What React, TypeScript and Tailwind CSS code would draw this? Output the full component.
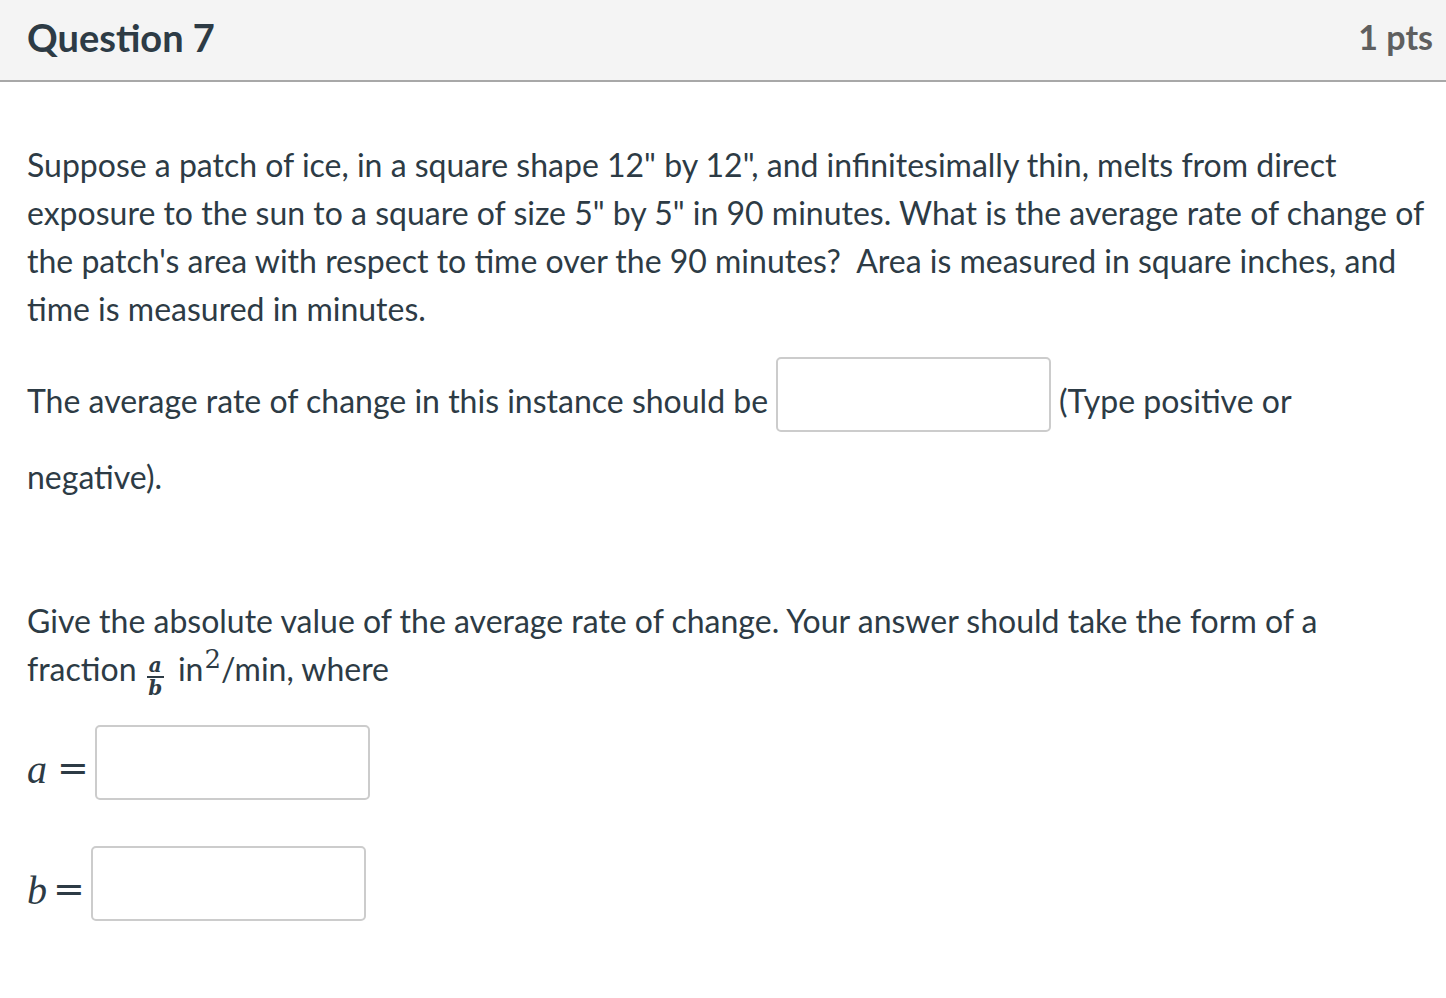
import React from "react";

const mathFont = { fontFamily: '"DejaVu Serif", "Liberation Serif", serif' };
const varFont = { fontFamily: '"Liberation Serif", "DejaVu Serif", serif' };

function Box({ className = "" }: { className?: string }) {
  return (
    <span
      className={`inline-block h-[75px] w-[275px] shrink-0 rounded-[5px] border-2 border-[#cccccc] bg-white ${className}`}
    />
  );
}

export default function App() {
  return (
    <div
      className="min-h-screen bg-white text-[#2d3b45]"
      style={{ fontFamily: 'Lato, "Liberation Sans", sans-serif' }}
    >
      <div className="flex h-[82px] items-center justify-between border-b-2 border-[#a8a8a8] bg-[#f4f4f4] pb-[6px] pl-[27px] pr-[13px]">
        <h2 className="text-[38px] font-bold leading-none text-[#2d3b45]">Question 7</h2>
        <div className="text-[34px] font-bold leading-none text-[#5f5f5f]">1 pts</div>
      </div>
      <div className="pl-[27px] pr-[10px] pt-[59px] text-[32px] leading-[48px]">
        <p className="whitespace-nowrap">
          Suppose a patch of ice, in a square shape 12" by 12", and infinitesimally thin, melts from direct
          <br />
          exposure to the sun to a square of size 5" by 5" in 90 minutes. What is the average rate of change of
          <br />
          the patch's area with respect to time over the 90 minutes?&nbsp; Area is measured in square inches, and
          <br />
          time is measured in minutes.
        </p>
        <div className="mt-[24px]">
          <div className="flex h-[96px] items-start">
            <span className="mt-[20px] whitespace-nowrap">The average rate of change in this instance should be</span>
            <Box className="ml-[8px] mr-[8px]" />
            <span className="mt-[20px] whitespace-nowrap">(Type positive or</span>
          </div>
          <div>negative).</div>
        </div>
        <p className="mt-[96px] whitespace-nowrap">
          Give the absolute value of the average rate of change. Your answer should take the form of a
          <br />
          fraction{" "}
          <span
            className="relative ml-[2px] mr-[6px] inline-flex translate-y-[4px] flex-col items-center align-middle text-[20px] font-bold leading-[17px]"
            style={mathFont}
          >
            <span className="italic">a</span>
            <span className="my-[2px] block h-[2px] w-[17px] bg-[#2d3b45]" />
            <span className="italic">b</span>
          </span>{" "}
          in<sup className="ml-[1px] text-[26px]" style={mathFont}>2</sup>/min, where
        </p>
        <div className="mt-[32px] flex items-start">
          <span className="mt-[21px] w-[20px] text-[40px] italic leading-[48px]" style={varFont}>a</span>
          <span className="ml-[10px] mt-[19px] text-[38px] leading-[48px]" style={mathFont}>=</span>
          <Box className="ml-[6px]" />
        </div>
        <div className="mt-[46px] flex items-start">
          <span className="mt-[21px] w-[20px] text-[40px] italic leading-[48px]" style={varFont}>b</span>
          <span className="ml-[6px] mt-[19px] text-[38px] leading-[48px]" style={mathFont}>=</span>
          <Box className="ml-[6px]" />
        </div>
      </div>
    </div>
  );
}
